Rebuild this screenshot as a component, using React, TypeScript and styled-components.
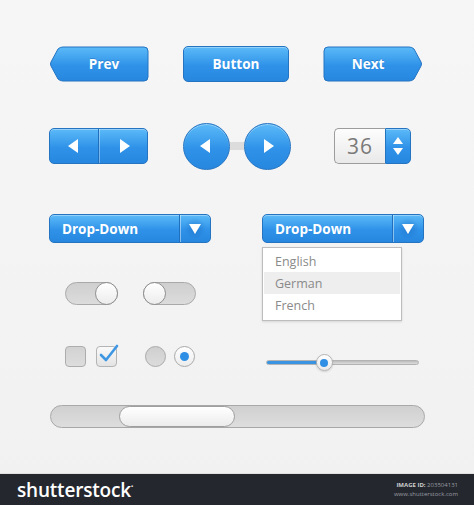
import React from 'react';
import styled, {createGlobalStyle} from 'styled-components';

const GlobalStyle = createGlobalStyle`
  html, body {
    margin: 0;
    padding: 0;
    background: #f3f3f3;
  }
  * {
    box-sizing: border-box;
  }
`;

const blueFill = 'linear-gradient(#5cbaf8, #2f92e8 55%, #2787df)';
const blueBorder = '#2474c2';

const App: React.FC = () => {
    return (
        <Page>
            <GlobalStyle/>
            <Kit>
                <Row>
                    <ArrowButton dir="left">Prev</ArrowButton>
                    <PlainButton>Button</PlainButton>
                    <ArrowButton dir="right">Next</ArrowButton>
                </Row>

                <NavRow>
                    <Segmented>
                        <SegPart><Tri dir="left"/></SegPart>
                        <SegPart><Tri dir="right"/></SegPart>
                    </Segmented>
                    <RoundPair>
                        <RoundBtn><Tri dir="left"/></RoundBtn>
                        <Bridge/>
                        <RoundBtn><Tri dir="right"/></RoundBtn>
                    </RoundPair>
                    <Spinner>
                        <SpinValue>36</SpinValue>
                        <SpinArrows>
                            <Tri dir="up" small/>
                            <Tri dir="down" small/>
                        </SpinArrows>
                    </Spinner>
                </NavRow>

                <Columns>
                    <Column>
                        <DropDown>
                            <DropLabel>Drop-Down</DropLabel>
                            <DropToggle><Tri dir="down"/></DropToggle>
                        </DropDown>
                        <ToggleRow>
                            <Toggle on/>
                            <Toggle/>
                        </ToggleRow>
                        <ChoiceRow>
                            <CheckBox/>
                            <CheckBox checked>
                                <svg width="22" height="22" viewBox="0 0 22 22">
                                    <path d="M4 11 L9 16 L20 2" fill="none" stroke="#3f97e4" strokeWidth="2.6"
                                          strokeLinecap="round" strokeLinejoin="round"/>
                                </svg>
                            </CheckBox>
                            <RadioGap/>
                            <Radio/>
                            <Radio checked/>
                        </ChoiceRow>
                    </Column>

                    <Column>
                        <DropDown>
                            <DropLabel>Drop-Down</DropLabel>
                            <DropToggle><Tri dir="down"/></DropToggle>
                        </DropDown>
                        <Menu>
                            <MenuItem>English</MenuItem>
                            <MenuItem active>German</MenuItem>
                            <MenuItem>French</MenuItem>
                        </Menu>
                        <Slider>
                            <SliderFill style={{width: '38%'}}/>
                            <SliderThumb style={{left: '38%'}}/>
                        </Slider>
                    </Column>
                </Columns>

                <ScrollTrack>
                    <ScrollThumb/>
                </ScrollTrack>
            </Kit>

            <Footer>
                <Brand>shutterstock<sup>·</sup></Brand>
                <Stock>
                    <div><b>IMAGE ID:</b> 203504131</div>
                    <div>www.shutterstock.com</div>
                </Stock>
            </Footer>
        </Page>
    )
};

export default App

// button with a pointed end, the outline is drawn as svg behind the label
const ArrowButton: React.FC<{ dir: 'left' | 'right'; children: React.ReactNode }> = ({dir, children}) => {
    const d = dir === 'left'
        ? 'M14 1 H95 Q99 1 99 5 V31 Q99 35 95 35 H14 Q11 35 9 33 L2 20 Q1 18 2 16 L9 3 Q11 1 14 1 Z'
        : 'M86 1 H5 Q1 1 1 5 V31 Q1 35 5 35 H86 Q89 35 91 33 L98 20 Q99 18 98 16 L91 3 Q89 1 86 1 Z';
    const id = `g-${dir}`;
    return (
        <ArrowWrap>
            <svg width="100" height="36" viewBox="0 0 100 36">
                <defs>
                    <linearGradient id={id} x1="0" y1="0" x2="0" y2="1">
                        <stop offset="0" stopColor="#5cbaf8"/>
                        <stop offset="0.55" stopColor="#2f92e8"/>
                        <stop offset="1" stopColor="#2787df"/>
                    </linearGradient>
                </defs>
                <path d={d} fill={`url(#${id})`} stroke={blueBorder} strokeWidth="1"/>
            </svg>
            <ArrowLabel dir={dir}>{children}</ArrowLabel>
        </ArrowWrap>
    );
};

const Page = styled.div`
  width: 474px;
  height: 505px;
  display: flex;
  flex-direction: column;
  font-family: "Open Sans", "Liberation Sans", sans-serif;
  background: linear-gradient(#f6f6f6, #f1f1f1);
  overflow: hidden;
`;

const Kit = styled.div`
  flex: 1;
  padding: 46px 0 0 49px;
`;

const Row = styled.div`
  display: flex;
  align-items: center;
  gap: 34px;
  height: 36px;
`;

const ArrowWrap = styled.div`
  position: relative;
  width: 100px;
  height: 36px;
  svg {
    display: block;
  }
`;

const ArrowLabel = styled.span<{ dir: 'left' | 'right' }>`
  position: absolute;
  inset: 0;
  display: flex;
  align-items: center;
  justify-content: center;
  padding: ${p => p.dir === 'left' ? '0 0 0 10px' : '0 10px 0 0'};
  color: #fff;
  font-weight: 700;
  font-size: 13.5px;
  text-shadow: 0 -1px 0 rgba(0, 60, 130, .25);
`;

const BlueBox = styled.div`
  background: ${blueFill};
  border: 1px solid ${blueBorder};
  box-shadow: inset 0 1px 0 rgba(255, 255, 255, .35);
  color: #fff;
`;

const PlainButton = styled(BlueBox)`
  width: 106px;
  height: 36px;
  border-radius: 5px;
  display: flex;
  align-items: center;
  justify-content: center;
  font-weight: 700;
  font-size: 13.5px;
`;

const NavRow = styled.div`
  display: flex;
  align-items: center;
  margin-top: 46px;
  height: 36px;
`;

const Segmented = styled(BlueBox)`
  width: 99px;
  height: 36px;
  border-radius: 5px;
  display: flex;
`;

const SegPart = styled.div`
  flex: 1;
  display: flex;
  align-items: center;
  justify-content: center;
  & + & {
    border-left: 1px solid #1f6fbd;
    box-shadow: inset 1px 0 0 rgba(255, 255, 255, .35);
  }
`;

const RoundPair = styled.div`
  display: flex;
  align-items: center;
  margin-left: 35px;
`;

const RoundBtn = styled(BlueBox)`
  width: 47px;
  height: 47px;
  border-radius: 50%;
  display: flex;
  align-items: center;
  justify-content: center;
`;

const Bridge = styled.div`
  width: 14px;
  height: 8px;
  background: #dcdcdc;
`;

const Tri = styled.span<{ dir: 'left' | 'right' | 'up' | 'down'; small?: boolean }>`
  display: block;
  width: 0;
  height: 0;
  border-style: solid;
  ${p => {
    const s = p.small ? 5 : 6;
    const l = p.small ? 7 : 10;
    switch (p.dir) {
        case 'left':
            return `border-width: ${s + 1}px ${l}px ${s + 1}px 0; border-color: transparent #fff transparent transparent; margin-right: 3px;`;
        case 'right':
            return `border-width: ${s + 1}px 0 ${s + 1}px ${l}px; border-color: transparent transparent transparent #fff; margin-left: 3px;`;
        case 'up':
            return `border-width: 0 ${s}px ${l}px ${s}px; border-color: transparent transparent #fff transparent;`;
        default:
            return `border-width: ${l}px ${s}px 0 ${s}px; border-color: #fff transparent transparent transparent;`;
    }
}}
`;

const Spinner = styled.div`
  display: flex;
  margin-left: 43px;
  height: 36px;
`;

const SpinValue = styled.div`
  width: 51px;
  border: 1px solid #9c9c9c;
  border-right: none;
  border-radius: 5px 0 0 5px;
  background: linear-gradient(#fdfdfd, #e9e9e9);
  color: #7a7a7a;
  font-size: 21px;
  display: flex;
  align-items: center;
  justify-content: center;
  letter-spacing: 1px;
`;

const SpinArrows = styled(BlueBox)`
  width: 26px;
  border-radius: 0 5px 5px 0;
  display: flex;
  flex-direction: column;
  align-items: center;
  justify-content: center;
  gap: 4px;
`;

const Columns = styled.div`
  display: grid;
  grid-template-columns: 162px 162px;
  column-gap: 51px;
  margin-top: 50px;
`;

const Column = styled.div`
  display: flex;
  flex-direction: column;
`;

const DropDown = styled(BlueBox)`
  height: 29px;
  border-radius: 5px;
  display: flex;
  align-items: stretch;
`;

const DropLabel = styled.span`
  flex: 1;
  display: flex;
  align-items: center;
  padding-left: 12px;
  font-weight: 700;
  font-size: 13.5px;
`;

const DropToggle = styled.div`
  width: 31px;
  display: flex;
  align-items: center;
  justify-content: center;
  border-left: 1px solid #1f6fbd;
  box-shadow: inset 1px 0 0 rgba(255, 255, 255, .45);
  background: radial-gradient(circle at 50% 50%, rgba(20, 100, 190, .45) 0, rgba(20, 100, 190, 0) 11px);
  & > span {
    margin-top: 1px;
  }
`;

const ToggleRow = styled.div`
  display: flex;
  gap: 25px;
  padding-left: 16px;
  margin-top: 39px;
`;

const Toggle = styled.div<{ on?: boolean }>`
  position: relative;
  width: 53px;
  height: 23px;
  border-radius: 12px;
  background: linear-gradient(#cfcfcf, #dcdcdc);
  border: 1px solid #a9a9a9;
  &::after {
    content: '';
    position: absolute;
    top: -1px;
    ${p => p.on ? 'right: -1px;' : 'left: -1px;'}
    width: 23px;
    height: 23px;
    border-radius: 50%;
    background: linear-gradient(#ffffff, #ececec);
    border: 1px solid #8f8f8f;
    box-sizing: border-box;
  }
`;

const ChoiceRow = styled.div`
  display: flex;
  align-items: center;
  gap: 10px;
  padding-left: 16px;
  margin-top: 41px;
`;

const CheckBox = styled.div<{ checked?: boolean }>`
  position: relative;
  width: 21px;
  height: 21px;
  border-radius: 4px;
  border: 1px solid ${p => p.checked ? '#b4b4b4' : '#adadad'};
  background: ${p => p.checked ? 'linear-gradient(#fafafa, #e3e3e3)' : 'linear-gradient(#d2d2d2, #dddddd)'};
  svg {
    position: absolute;
    left: 0;
    top: -3px;
  }
`;

const RadioGap = styled.div`
  width: 10px;
`;

const Radio = styled.div<{ checked?: boolean }>`
  width: 21px;
  height: 21px;
  border-radius: 50%;
  border: 1px solid #a9a9a9;
  background: ${p => p.checked ? 'linear-gradient(#ffffff, #ececec)' : 'linear-gradient(#cfcfcf, #dcdcdc)'};
  display: flex;
  align-items: center;
  justify-content: center;
  margin-left: -2px;
  &::after {
    content: '';
    display: ${p => p.checked ? 'block' : 'none'};
    width: 9px;
    height: 9px;
    border-radius: 50%;
    background: #2f8fe4;
  }
`;

const Menu = styled.div`
  width: 140px;
  margin-top: 4px;
  padding: 2px 0 4px;
  background: #fff;
  border: 1px solid #bdbdbd;
  box-shadow: 0 1px 2px rgba(0, 0, 0, .12);
`;

const MenuItem = styled.div<{ active?: boolean }>`
  height: 22px;
  display: flex;
  align-items: center;
  padding-left: 11px;
  margin: 0 1px;
  font-size: 12.5px;
  color: #8a8a8a;
  background: ${p => p.active ? '#eeeeee' : 'transparent'};
`;

const Slider = styled.div`
  position: relative;
  width: 153px;
  height: 5px;
  margin: 39px 0 0 4px;
  border-radius: 3px;
  background: linear-gradient(#bdbdbd, #dcdcdc);
  border: 1px solid #b3b3b3;
`;

const SliderFill = styled.div`
  height: 100%;
  border-radius: 3px;
  background: #3a94e2;
`;

const SliderThumb = styled.div`
  position: absolute;
  top: 50%;
  width: 17px;
  height: 17px;
  margin: -8.5px 0 0 -8.5px;
  border-radius: 50%;
  background: linear-gradient(#ffffff, #e9e9e9);
  border: 1px solid #b4b4b4;
  box-shadow: 0 1px 2px rgba(0, 0, 0, .15);
  display: flex;
  align-items: center;
  justify-content: center;
  &::after {
    content: '';
    width: 8px;
    height: 8px;
    border-radius: 50%;
    background: #2f8fe4;
  }
`;

const ScrollTrack = styled.div`
  width: 375px;
  height: 23px;
  margin: 38px 0 0 1px;
  border-radius: 12px;
  background: linear-gradient(#d0d0d0, #dddddd);
  border: 1px solid #a8a8a8;
  padding: 0 0 0 68px;
`;

const ScrollThumb = styled.div`
  width: 116px;
  height: 21px;
  border-radius: 11px;
  background: linear-gradient(#ffffff, #ececec);
  border: 1px solid #9f9f9f;
`;

const Footer = styled.div`
  height: 32px;
  background: #24272e;
  border-top: 1px solid #e0e0e0;
  display: flex;
  align-items: center;
  justify-content: space-between;
  padding: 0 16px 0 17px;
`;

const Brand = styled.div`
  color: #fff;
  font-family: "Open Sans", "Liberation Sans", sans-serif;
  font-weight: 600;
  font-size: 19px;
  letter-spacing: -0.2px;
  sup {
    font-size: 10px;
  }
`;

const Stock = styled.div`
  color: #9a9ca2;
  font-size: 6px;
  line-height: 9px;
  text-align: right;
  b {
    color: #d0d0d0;
  }
`;
